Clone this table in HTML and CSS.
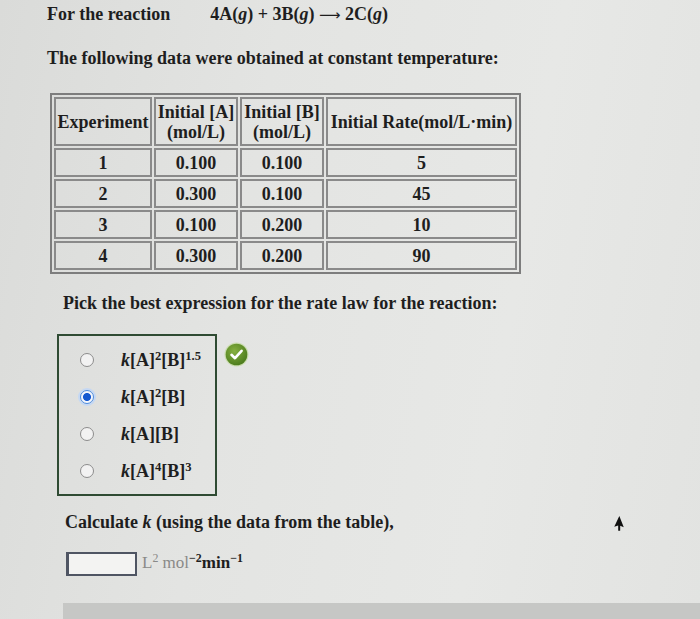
FILE: index.html
```html
<!DOCTYPE html>
<html>
<head>
<meta charset="utf-8">
<link rel="stylesheet" href="styles.css">
</head>
<body>
<div class="page">
  <div class="line1">
    <span>For the reaction</span>
    <span class="formula">4A(<i>g</i>) + 3B(<i>g</i>) <span class="arrow">⟶</span> 2C(<i>g</i>)</span>
  </div>
  <div class="line2">The following data were obtained at constant temperature:</div>

  <table class="data">
    <tr class="head">
      <th class="c-exp">Experiment</th>
      <th class="c-a">Initial [A]<br>(mol/L)</th>
      <th class="c-b">Initial [B]<br>(mol/L)</th>
      <th class="c-rate">Initial Rate(mol/L·min)</th>
    </tr>
    <tr><td>1</td><td>0.100</td><td>0.100</td><td>5</td></tr>
    <tr><td>2</td><td>0.300</td><td>0.100</td><td>45</td></tr>
    <tr><td>3</td><td>0.100</td><td>0.200</td><td>10</td></tr>
    <tr><td>4</td><td>0.300</td><td>0.200</td><td>90</td></tr>
  </table>

  <div class="pick">Pick the best expression for the rate law for the reaction:</div>

  <div class="choice-row">
    <div class="options">
      <div class="opt"><span class="radio"></span><span class="expr"><i>k</i>[A]<sup>2</sup>[B]<sup>1.5</sup></span></div>
      <div class="opt"><span class="radio on"></span><span class="expr"><i>k</i>[A]<sup>2</sup>[B]</span></div>
      <div class="opt"><span class="radio"></span><span class="expr"><i>k</i>[A][B]</span></div>
      <div class="opt"><span class="radio"></span><span class="expr"><i>k</i>[A]<sup>4</sup>[B]<sup>3</sup></span></div>
    </div>
    <svg class="check" width="25" height="25" viewBox="0 0 25 25">
      <defs>
        <radialGradient id="g1" cx="40%" cy="35%" r="70%">
          <stop offset="0" stop-color="#86b040"/>
          <stop offset="1" stop-color="#4a7a1c"/>
        </radialGradient>
      </defs>
      <circle cx="12.5" cy="12.5" r="12" fill="#c9dcae"/>
      <circle cx="12.5" cy="12.5" r="10.8" fill="url(#g1)"/>
      <path d="M7.5 12.8 L11 16.2 L17.6 8.8" fill="none" stroke="#ffffff" stroke-width="2.6" stroke-linecap="round" stroke-linejoin="round"/>
    </svg>
  </div>

  <div class="calc">Calculate <i>k</i> (using the data from the table),</div>
  <div class="answer">
    <span class="field"></span>
    <span class="units"><span class="light">L<sup>2</sup> mol</span><sup>−2</sup>min<sup>−1</sup></span>
  </div>
</div>
<div class="strip"></div>
<svg class="cursor" width="14" height="16" viewBox="0 0 14 16">
  <path d="M2 1 L2 13 L5 10.2 L7.2 14.8 L9 14 L6.9 9.4 L10.8 9.4 Z" fill="#111" transform="rotate(25 6 8)"/>
</svg>
</body>
</html>
```
FILE: styles.css
```css
html, body {
  margin: 0;
  padding: 0;
}
body {
  width: 700px;
  height: 619px;
  overflow: hidden;
  position: relative;
  background: linear-gradient(100deg, #dadbd9 0%, #e3e4e2 35%, #e7e8e6 70%, #e2e3e1 100%);
  font-family: "Liberation Serif", "Times New Roman", serif;
  font-weight: bold;
  color: #1e1e1e;
}
.page {
  padding: 4px 0 0 47px;
}
.line1 {
  display: flex;
  gap: 40px;
  font-size: 18px;
  line-height: 20px;
}
.arrow {
  font-weight: normal;
  font-size: 15px;
  font-family: "DejaVu Sans", sans-serif;
}
.line2 {
  margin-top: 23px;
  font-size: 18px;
  line-height: 20px;
}
table.data {
  margin: 25px 0 0 3px;
  border: 2px solid #7d7d7d;
  border-spacing: 2px;
  table-layout: fixed;
  font-size: 18px;
  line-height: 20px;
}
table.data th,
table.data td {
  box-sizing: border-box;
  border: 2px solid #8a8a8a;
  padding: 0;
  text-align: center;
  height: 29px;
  font-weight: bold;
}
table.data tr.head th {
  height: 49px;
}
.c-exp { width: 98px; }
.c-a { width: 84px; }
.c-b { width: 84px; }
.c-rate { width: 191px; }

.pick {
  margin: 19px 0 0 16px;
  font-size: 18px;
  line-height: 20px;
}
.choice-row {
  margin: 21px 0 0 10px;
  display: flex;
  align-items: flex-start;
  gap: 7px;
}
.options {
  width: 160px;
  box-sizing: border-box;
  border: 2px solid #2f4b33;
  padding: 5px 0;
}
.opt {
  height: 37px;
  display: flex;
  align-items: center;
  padding-left: 21px;
}
.radio {
  width: 14px;
  height: 14px;
  box-sizing: border-box;
  border-radius: 50%;
  border: 1.5px solid #8c8c8c;
  background: #f2f2f2;
  flex: none;
}
.radio.on {
  border: 1.5px solid #4c8ce0;
  background: radial-gradient(circle, #1559d0 0 3.6px, #f4f6fb 4.4px);
  box-shadow: 0 0 0 2px #c5d8f3;
}
.expr {
  margin-left: 27px;
  font-size: 18px;
  line-height: 20px;
}
sup {
  font-size: 0.7em;
  line-height: 0;
  vertical-align: 0.5em;
}
.check {
  margin-top: 8px;
  display: block;
}
.calc {
  margin: 16px 0 0 18px;
  font-size: 18px;
  line-height: 20px;
}
.answer {
  margin: 20px 0 0 19px;
  display: flex;
  align-items: center;
  gap: 5px;
}
.field {
  display: block;
  width: 71px;
  height: 24px;
  box-sizing: border-box;
  border: 2px solid #4f5563;
  border-left-width: 3px;
  background: #f3f3f2;
}
.units {
  font-size: 17px;
  line-height: 20px;
  margin-top: -3px;
}
.units .light {
  color: #8a8a88;
  font-weight: normal;
}
.strip {
  position: absolute;
  left: 63px;
  right: 0;
  top: 603px;
  height: 16px;
  background: #c6c7c5;
}
.cursor {
  position: absolute;
  left: 614px;
  top: 516px;
}
```
